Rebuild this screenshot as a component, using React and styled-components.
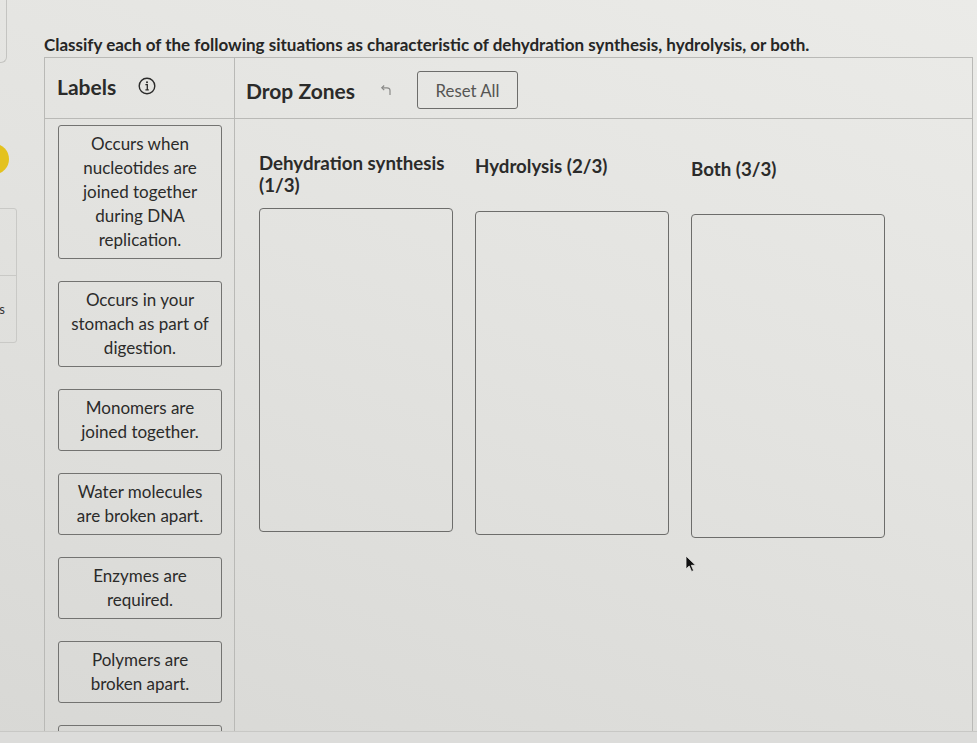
import React from "react"
import styled, { createGlobalStyle } from "styled-components"

const GlobalStyle = createGlobalStyle`
  html, body {
    margin: 0;
    padding: 0;
  }
  body {
    font-family: Lato, "Open Sans", "Liberation Sans", sans-serif;
    color: #2b2b2a;
  }
`

const labels = [
  ["Occurs when", "nucleotides are", "joined together", "during DNA", "replication."],
  ["Occurs in your", "stomach as part of", "digestion."],
  ["Monomers are", "joined together."],
  ["Water molecules", "are broken apart."],
  ["Enzymes are", "required."],
  ["Polymers are", "broken apart."],
  ["", ""],
]

const zones = [
  ["Dehydration synthesis", "(1/3)"],
  ["Hydrolysis (2/3)"],
  ["Both (3/3)"],
]

const InfoIcon = () => (
  <svg width="18" height="18" viewBox="0 0 18 18" fill="none">
    <circle cx="9" cy="9" r="7.8" stroke="#2b2b2a" strokeWidth="1.4" />
    <circle cx="9" cy="5.2" r="1" fill="#2b2b2a" />
    <path d="M7.4 7.6H9.3V12.6M7.4 12.8H10.8" stroke="#2b2b2a" strokeWidth="1.3" />
  </svg>
)

const UndoIcon = () => (
  <svg width="12" height="12" viewBox="0 0 12 12" fill="none">
    <path d="M10 11V6.5C10 4.8 8.8 3.8 7 3.8H2" stroke="#8a8a88" strokeWidth="1.2" />
    <path d="M4.2 1.5L1.8 3.8L4.2 6.1" stroke="#8a8a88" strokeWidth="1.2" />
  </svg>
)

const Cursor = () => (
  <svg width="12" height="18" viewBox="0 0 12 18">
    <path d="M1 1V14L4.2 11L6.6 16.5L8.6 15.6L6.3 10.3H10.6Z" fill="#111" stroke="#e8e8e6" strokeWidth="0.8" />
  </svg>
)

const App = () => {
  return (
    <Page>
      <GlobalStyle />
      <Body>
        <Rail>
          <RailTop />
          <RailDot />
          <RailBox>
            <RailCell />
            <RailCell>s</RailCell>
          </RailBox>
        </Rail>
        <Main>
          <Prompt>
            Classify each of the following situations as characteristic of dehydration synthesis,
            hydrolysis, or both.
          </Prompt>
          <Panel>
            <LabelsHead>
              <HeadTitle>Labels</HeadTitle>
              <InfoIcon />
            </LabelsHead>
            <ZonesHead>
              <HeadTitle>Drop Zones</HeadTitle>
              <UndoWrap>
                <UndoIcon />
              </UndoWrap>
              <ResetButton type='button'>Reset All</ResetButton>
            </ZonesHead>
            <LabelsBody>
              {labels.map((lines, i) => (
                <Card key={i}>
                  {lines.map((l, j) => (
                    <span key={j}>
                      {l}
                      {j < lines.length - 1 && <br />}
                    </span>
                  ))}
                </Card>
              ))}
            </LabelsBody>
            <ZonesBody>
              {zones.map((title, i) => (
                <Zone key={i} $drop={i * 3}>
                  <ZoneTitle>
                    {title.map((t, j) => (
                      <div key={j}>{t}</div>
                    ))}
                  </ZoneTitle>
                  <DropBox />
                </Zone>
              ))}
            </ZonesBody>
          </Panel>
        </Main>
      </Body>
      <BottomBar />
      <CursorWrap>
        <Cursor />
      </CursorWrap>
    </Page>
  )
}

export default App

const Page = styled.div`
  position: relative;
  width: 977px;
  height: 743px;
  overflow: hidden;
  display: flex;
  flex-direction: column;
  background: linear-gradient(200deg, #ebebe8 0%, #e3e3e0 45%, #d8d8d5 100%);
`

const Body = styled.div`
  flex: 1;
  min-height: 0;
  display: flex;
  overflow: hidden;
`

const Rail = styled.div`
  width: 44px;
  flex: none;
  overflow: hidden;
  display: flex;
  flex-direction: column;
`

const RailTop = styled.div`
  width: 40px;
  height: 62px;
  margin-left: -34px;
  border-right: 1px solid #c4c4c1;
  border-bottom: 1px solid #c4c4c1;
  border-bottom-right-radius: 6px;
`

const RailDot = styled.div`
  width: 28px;
  height: 30px;
  margin: 81px 0 0 -19px;
  border-radius: 50%;
  background: #e4c21e;
`

const RailBox = styled.div`
  width: 40px;
  margin: 34px 0 0 -25px;
  border: 1px solid #c9c9c6;
  border-radius: 3px;
  display: flex;
  flex-direction: column;
`

const RailCell = styled.div`
  height: 66px;
  display: flex;
  align-items: center;
  justify-content: flex-end;
  padding-right: 11px;
  font-size: 13px;
  color: #333;
  & + & {
    border-top: 1px solid #c9c9c6;
  }
`

const Main = styled.div`
  flex: 1;
  min-width: 0;
  display: flex;
  flex-direction: column;
`

const Prompt = styled.p`
  margin: 35px 0 2px;
  font-size: 17px;
  line-height: 20px;
  font-weight: 700;
  color: #262625;
  white-space: nowrap;
`

const Panel = styled.div`
  flex: 1;
  display: grid;
  grid-template-columns: 190px 1fr;
  grid-template-rows: 61px 1fr;
  border-top: 1px solid #b9b9b6;
  border-left: 1px solid #b9b9b6;
  border-right: 1px solid #b9b9b6;
  margin-right: 4px;
`

const HeadBase = styled.div`
  display: flex;
  align-items: center;
  border-bottom: 1px solid #b9b9b6;
`

const LabelsHead = styled(HeadBase)`
  padding: 0 0 4px 12px;
  gap: 22px;
  border-right: 1px solid #b9b9b6;
`

const ZonesHead = styled(HeadBase)`
  padding: 4px 0 0 11px;
`

const HeadTitle = styled.span`
  font-size: 21px;
  font-weight: 700;
  color: #2b2b2a;
`

const UndoWrap = styled.span`
  display: inline-flex;
  margin-left: 25px;
`

const ResetButton = styled.button`
  margin-left: 25px;
  width: 101px;
  height: 38px;
  border: 1px solid #6d6d6b;
  border-radius: 3px;
  background: transparent;
  font-family: inherit;
  font-size: 16.8px;
  color: #555553;
`

const LabelsBody = styled.div`
  display: flex;
  flex-direction: column;
  gap: 22px;
  padding: 6px 11px 0 13px;
  border-right: 1px solid #b9b9b6;
  overflow: hidden;
`

const Card = styled.div`
  flex: none;
  width: 164px;
  box-sizing: border-box;
  padding: 6px 4px;
  border: 1px solid #737371;
  border-radius: 3px;
  text-align: center;
  font-size: 17px;
  line-height: 24px;
  color: #2b2b2a;
`

const ZonesBody = styled.div`
  display: flex;
  gap: 22px;
  padding: 33px 0 0 24px;
  align-items: flex-start;
`

const Zone = styled.div`
  width: 194px;
  display: flex;
  flex-direction: column;
  gap: 12px;
  margin-top: ${(p) => p.$drop}px;
`

const ZoneTitle = styled.div`
  height: 44px;
  font-size: 18.7px;
  font-weight: 700;
  line-height: 22px;
  color: #2b2b2a;
  white-space: nowrap;
`

const DropBox = styled.div`
  height: 322px;
  border: 1px solid #6d6d6b;
  border-radius: 4px;
`

const BottomBar = styled.div`
  height: 11px;
  flex: none;
  background: #dcdcda;
  border-top: 1px solid #c8c8c5;
`

const CursorWrap = styled.div`
  position: absolute;
  left: 685px;
  top: 555px;
  display: flex;
`
